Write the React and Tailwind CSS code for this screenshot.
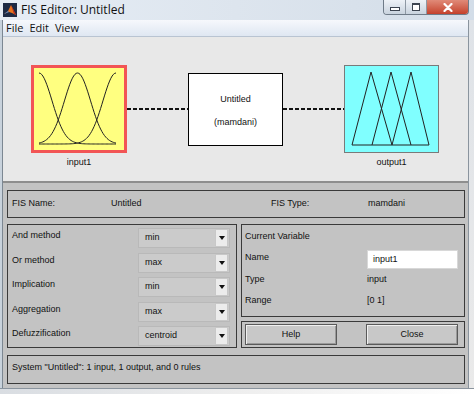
import React from "react";

const ui = { fontFamily: '"Liberation Sans", Arial, sans-serif' };
const win = { fontFamily: '"Open Sans", "Noto Sans", sans-serif' };

function gaussPath(c) {
  const s = 0.1699;
  let d = "";
  for (let i = 0; i <= 60; i++) {
    const x = i / 60;
    const mf = Math.exp(-((x - c) * (x - c)) / (2 * s * s));
    const X = 5 + 77 * x;
    const Y = 76 - 71 * mf;
    d += (i === 0 ? "M" : "L") + X.toFixed(2) + " " + Y.toFixed(2) + " ";
  }
  return d;
}

function MatlabIcon() {
  return (
    <svg width="14" height="14" viewBox="0 0 14 14">
      <rect width="14" height="14" fill="#1d2a44" />
      <path d="M1 11 L5 8 L8 2 L10 6 L13 12 L9 10 L6 9 Z" fill="#e8731c" />
      <path d="M8 2 L10 6 L13 12 L11 11 Z" fill="#b3261e" />
      <path d="M1 11 L5 8 L6 9 Z" fill="#3a7fd0" />
    </svg>
  );
}

function Dashes() {
  return (
    <svg width="61" height="2" className="mt-[43px] shrink-0">
      <line x1="0" y1="1" x2="61" y2="1" stroke="#111" strokeWidth="2" strokeDasharray="4 2" />
    </svg>
  );
}

function Dropdown({ value }) {
  return (
    <div className="w-[92px] h-[20px] flex items-center bg-[#cbcbcb] border border-[#b9b9b9]">
      <span className="flex-1 pl-[6px] text-[9px] text-[#111]">{value}</span>
      <div className="w-[13px] h-[18px] mr-[1px] bg-[#ececec] border border-[#c8c8c8] flex items-center justify-center">
        <svg width="6" height="4" viewBox="0 0 6 4">
          <path d="M0 0 H6 L3 4 Z" fill="#111" />
        </svg>
      </div>
    </div>
  );
}

function Button({ children }) {
  return (
    <div className="w-[92px] h-[21px] flex items-center justify-center bg-[#c8c8c8] border border-[#5a5a5a] shadow-[inset_1px_1px_0_#f0f0f0,inset_-1px_-1px_0_#9a9a9a] text-[9px] text-[#111]">
      {children}
    </div>
  );
}

const rules = [
  ["And method", "min"],
  ["Or method", "max"],
  ["Implication", "min"],
  ["Aggregation", "max"],
  ["Defuzzification", "centroid"],
];

export default function App() {
  return (
    <div className="w-[474px] h-[394px] flex flex-col overflow-hidden bg-[#f3f3f3]">
      {/* title bar */}
      <div className="h-[20px] flex items-start bg-gradient-to-r from-[#e6edf5] via-[#dde5ee] to-[#d3dde8]" style={win}>
        <div className="pl-[3px] pt-[3px]">
          <MatlabIcon />
        </div>
        <span className="ml-[4px] mt-[1px] text-[12px] leading-[17px] text-[#111]">FIS Editor: Untitled</span>
        <div className="flex-1" />
        <div className="flex h-[15px] mr-[5px] rounded-b-[4px] overflow-hidden border border-t-0 border-[#6f7b88]">
          <div className="w-[22px] bg-gradient-to-b from-[#eef2f7] to-[#c9d3de] border-r border-[#8e98a3] flex items-center justify-center">
            <div className="w-[10px] h-[4px] border border-[#3c4450] bg-white mt-[4px]" />
          </div>
          <div className="w-[21px] bg-gradient-to-b from-[#eef2f7] to-[#c9d3de] border-r border-[#8e98a3] flex items-center justify-center">
            <div className="w-[8px] h-[8px] border border-[#3c4450] border-t-2 bg-white" />
          </div>
          <div className="w-[41px] bg-gradient-to-b from-[#e08a78] to-[#c4402b] flex items-center justify-center">
            <svg width="10" height="9" viewBox="0 0 10 9">
              <path d="M1.5 1 L8.5 8 M8.5 1 L1.5 8" stroke="#fff" strokeWidth="2.2" strokeLinecap="round" />
            </svg>
          </div>
        </div>
      </div>

      <div className="h-[368px] flex">
        <div className="w-[3px] bg-[#c8d2dc] border-r border-[#7c8792]" />
        <div className="w-[465px] flex flex-col">
          {/* menu bar */}
          <div className="h-[17px] flex items-center gap-[6px] pl-[3px] bg-gradient-to-b from-[#f6f8fc] to-[#dfe7f2] border-b border-[#b9c4d2] text-[11px] text-[#111]" style={win}>
            <span>File</span>
            <span>Edit</span>
            <span>View</span>
          </div>

          {/* diagram canvas */}
          <div className="h-[144px] bg-[#e8e8e8] pt-[28px] pl-[28px]" style={ui}>
            <div className="flex items-start">
              <div className="flex flex-col items-center">
                <div className="w-[96px] h-[88px] border-[3px] border-[#f25555] bg-[#ffff80]">
                  <svg width="90" height="82" viewBox="0 0 90 82">
                    <path d={gaussPath(0)} fill="none" stroke="#222" strokeWidth="1" />
                    <path d={gaussPath(0.5)} fill="none" stroke="#222" strokeWidth="1" />
                    <path d={gaussPath(1)} fill="none" stroke="#222" strokeWidth="1" />
                  </svg>
                </div>
                <span className="mt-[4px] text-[9px] leading-[11px] text-[#111]">input1</span>
              </div>
              <Dashes />
              <div className="w-[95px] h-[73px] mt-[8px] bg-white border border-black flex flex-col items-center pt-[19px] gap-[11px] text-[9px] leading-[12px] text-[#111]">
                <span>Untitled</span>
                <span>(mamdani)</span>
              </div>
              <Dashes />
              <div className="flex flex-col items-center">
                <div className="w-[95px] h-[88px] border border-[#7a7a7a] bg-[#80ffff]">
                  <svg width="93" height="86" viewBox="0 0 93 86">
                    <path
                      d="M7 79 L84 79 M7 79 L26 6 L47 79 M27 79 L46 6 L66 79 M47 79 L66 6 L84 79"
                      fill="none"
                      stroke="#222"
                      strokeWidth="1"
                    />
                  </svg>
                </div>
                <span className="mt-[4px] text-[9px] leading-[11px] text-[#111]">output1</span>
              </div>
            </div>
          </div>

          {/* lower panels */}
          <div className="flex-1 bg-[#c3c3c3] border-t-2 border-[#8e8e8e] pt-[7px] pl-[4px] flex flex-col text-[9px] text-[#111]" style={ui}>
            <div className="w-[458px] h-[28px] border border-[#3a3a3a] flex items-start pt-[6px] pl-[4px]">
              <span className="w-[99px]">FIS Name:</span>
              <span className="w-[160px]">Untitled</span>
              <span className="w-[97px]">FIS Type:</span>
              <span>mamdani</span>
            </div>

            <div className="mt-[6px] flex gap-[4px] h-[124px]">
              <div className="w-[230px] border border-[#3a3a3a] flex flex-col gap-[4.5px] pt-[3px] pl-[4px] pr-[6px]">
                {rules.map(([label, value]) => (
                  <div key={label} className="h-[20px] flex justify-between items-start">
                    <span className="leading-[12px] pt-[1px]">{label}</span>
                    <Dropdown value={value} />
                  </div>
                ))}
              </div>

              <div className="w-[224px] flex flex-col gap-[4px]">
                <div className="h-[93px] border border-[#3a3a3a] pl-[3px] pt-[5px] flex flex-col">
                  <span className="leading-[12px]">Current Variable</span>
                  <div className="mt-[8px] flex items-start">
                    <span className="w-[122px] leading-[12px] pt-[1px]">Name</span>
                    <div className="w-[91px] h-[19px] bg-white border border-[#d8d8d8] flex items-center pl-[5px]">input1</div>
                  </div>
                  <div className="mt-[4px] flex">
                    <span className="w-[122px] leading-[12px]">Type</span>
                    <span className="leading-[12px]">input</span>
                  </div>
                  <div className="mt-[9px] flex">
                    <span className="w-[122px] leading-[12px]">Range</span>
                    <span className="leading-[12px]">[0 1]</span>
                  </div>
                </div>
                <div className="h-[27px] border border-[#3a3a3a] flex items-start justify-between pt-[2px] pl-[3px] pr-[6px]">
                  <Button>Help</Button>
                  <Button>Close</Button>
                </div>
              </div>
            </div>

            <div className="mt-[7px] w-[458px] h-[29px] border border-[#3a3a3a] pl-[4px] pt-[5px]">
              System "Untitled": 1 input, 1 output, and 0 rules
            </div>
          </div>
        </div>
        <div className="w-[6px] bg-gradient-to-b from-[#dfe3e8] to-[#eaeaea] border-l border-[#8a949e]" />
      </div>
      <div className="h-[6px] bg-gradient-to-r from-[#d9dde2] via-[#eeeeee] to-[#ffffff] border-t border-[#8a949e]" />
    </div>
  );
}
